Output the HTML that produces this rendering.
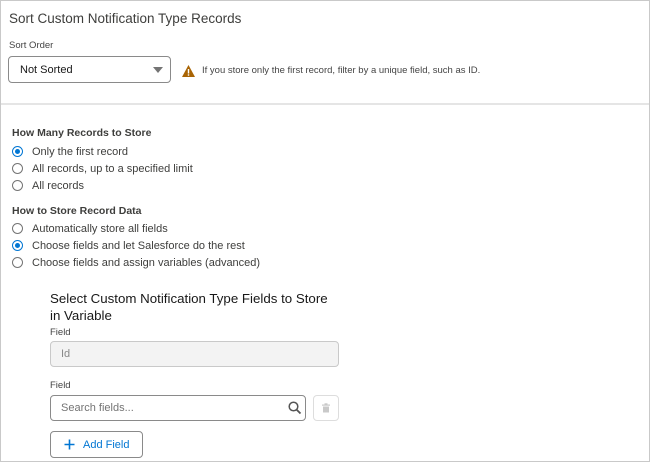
<!DOCTYPE html>
<html><head><style>
body{margin:0;width:650px;height:462px;background:#fff;font-family:"Liberation Sans",sans-serif;color:#181818;overflow:hidden;position:relative}
.a{position:absolute;white-space:nowrap}
.frame{position:absolute;left:0;top:0;width:648px;height:460px;border:1px solid #c9c9c9}
.sep{position:absolute;left:1px;width:648px;top:103px;height:2px;background:#e5e5e5}
.radio{position:absolute;left:12px;width:11px;height:11px;border:1px solid #747474;border-radius:50%;box-sizing:border-box;background:#fff}
.radio.on{border-color:#0176d3}
.radio.on::after{content:"";position:absolute;left:2px;top:2px;width:5px;height:5px;border-radius:50%;background:#0176d3}
.rl{position:absolute;left:32px;font-size:11px;color:#3e3e3c}
.h{position:absolute;left:12px;font-size:10.5px;font-weight:bold;color:#3e3e3c}
.lbl{position:absolute;font-size:9.5px;color:#444}
</style></head><body>
<div class="frame"></div>
<div class="sep"></div>
<div class="a" style="left:9px;top:11px;font-size:13.5px;color:#3e3e3c">Sort Custom Notification Type Records</div>
<div class="lbl a" style="left:9px;top:40px">Sort Order</div>
<div class="a" style="left:8px;top:56px;width:163px;height:27px;border:1px solid #8a8a8a;border-radius:4px;box-sizing:border-box"></div>
<div class="a" style="left:20px;top:64px;font-size:11px;color:#181818">Not Sorted</div>
<div class="a" style="left:153px;top:67px;width:0;height:0;border-left:5px solid transparent;border-right:5px solid transparent;border-top:6px solid #747474"></div>
<svg class="a" style="left:181px;top:64px" width="15" height="14" viewBox="0 0 15 14"><path d="M7.5 1 L14 13 L1 13 Z" fill="#a96404"/><rect x="6.8" y="5" width="1.4" height="4.5" fill="#fff"/><rect x="6.8" y="10.3" width="1.4" height="1.4" fill="#fff"/></svg>
<div class="a" style="left:202px;top:65px;font-size:9.5px;color:#444">If you store only the first record, filter by a unique field, such as ID.</div>

<div class="h a" style="top:127px">How Many Records to Store</div>
<div class="radio on" style="top:146px"></div><div class="rl a" style="top:146px">Only the first record</div>
<div class="radio" style="top:163px"></div><div class="rl a" style="top:163px">All records, up to a specified limit</div>
<div class="radio" style="top:180px"></div><div class="rl a" style="top:180px">All records</div>
<div class="h a" style="top:205px">How to Store Record Data</div>
<div class="radio" style="top:223px"></div><div class="rl a" style="top:223px">Automatically store all fields</div>
<div class="radio on" style="top:240px"></div><div class="rl a" style="top:240px">Choose fields and let Salesforce do the rest</div>
<div class="radio" style="top:257px"></div><div class="rl a" style="top:257px">Choose fields and assign variables (advanced)</div>

<div class="a" style="left:50px;top:290px;font-size:13.3px;line-height:17px;color:#181818">Select Custom Notification Type Fields to Store<br>in Variable</div>
<div class="lbl a" style="left:50px;top:327px">Field</div>
<div class="a" style="left:50px;top:341px;width:289px;height:26px;border:1px solid #c9c9c9;border-radius:4px;background:#f3f3f3;box-sizing:border-box"></div>
<div class="a" style="left:61px;top:348px;font-size:11px;color:#888">Id</div>
<div class="lbl a" style="left:50px;top:380px">Field</div>
<div class="a" style="left:50px;top:395px;width:256px;height:26px;border:1px solid #8a8a8a;border-radius:4px;box-sizing:border-box"></div>
<div class="a" style="left:61px;top:402px;font-size:11px;color:#747474">Search fields...</div>
<svg class="a" style="left:288px;top:401px" width="14" height="14" viewBox="0 0 14 14"><circle cx="5.5" cy="5.5" r="4.3" fill="none" stroke="#555" stroke-width="1.5"/><path d="M8.7 8.7 L12.5 12.5" stroke="#555" stroke-width="1.8"/></svg>
<div class="a" style="left:313px;top:395px;width:26px;height:26px;border:1px solid #ddd;border-radius:4px;box-sizing:border-box"></div>
<svg class="a" style="left:321px;top:403px" width="10" height="10" viewBox="0 0 10 10"><rect x="1" y="1.5" width="8" height="1.2" fill="#c9c9c9"/><rect x="3.5" y="0.3" width="3" height="1.2" fill="#c9c9c9"/><rect x="2" y="3.5" width="6" height="6" fill="#c9c9c9"/></svg>
<div class="a" style="left:50px;top:431px;width:93px;height:27px;border:1px solid #8a8a8a;border-radius:4px;box-sizing:border-box"></div>
<svg class="a" style="left:64px;top:439px" width="11" height="11" viewBox="0 0 11 11"><path d="M5.5 0.5V10.5M0.5 5.5H10.5" stroke="#0176d3" stroke-width="1.6"/></svg>
<div class="a" style="left:83px;top:439px;font-size:11px;color:#0176d3">Add Field</div>
</body></html>
